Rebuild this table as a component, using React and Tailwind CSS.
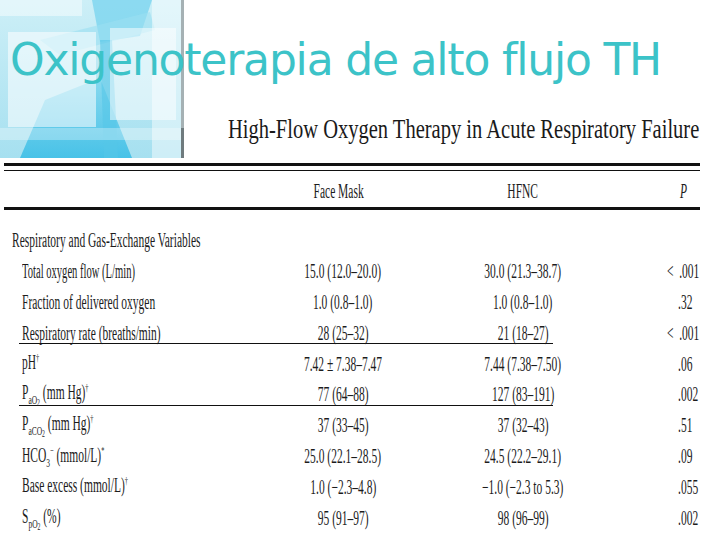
import React from "react";

const serif = { fontFamily: '"Liberation Serif", "Times New Roman", serif' };

function Decoration() {
  return (
    <svg className="absolute left-0 top-0" width="184" height="158" viewBox="0 0 184 158">
      <defs>
        <linearGradient id="dbg" x1="0" y1="0" x2="0" y2="1">
          <stop offset="0" stopColor="#cdeff7" />
          <stop offset="1" stopColor="#a6e0f0" />
        </linearGradient>
        <linearGradient id="dbeam" x1="0" y1="0" x2="0" y2="1">
          <stop offset="0" stopColor="#7fd6ee" />
          <stop offset="1" stopColor="#38bde6" />
        </linearGradient>
      </defs>
      <rect width="184" height="158" fill="url(#dbg)" />
      <polygon points="20,158 45,100 100,78 132,158" fill="url(#dbeam)" opacity="0.85" />
      <polygon points="92,0 152,0 140,36 100,42" fill="#70d2ee" opacity="0.7" />
      <polygon points="40,40 150,12 155,30 60,55" fill="#9be0f2" opacity="0.6" />
      <polygon points="100,40 112,40 118,158 104,158" fill="#55c6e8" opacity="0.6" />
      <rect x="0" y="0" width="82" height="16" fill="#ffffff" opacity="0.45" />
      <rect x="8" y="32" width="88" height="95" fill="#ffffff" opacity="0.55" />
      <rect x="110" y="28" width="66" height="92" fill="#ffffff" opacity="0.5" />
      <rect x="152" y="0" width="30" height="158" fill="#ffffff" opacity="0.45" />
      <rect x="0" y="128" width="184" height="12" fill="#ffffff" opacity="0.3" />
      <rect x="181" y="0" width="3" height="158" fill="#a5b1b4" />
      <rect x="181" y="128" width="3" height="30" fill="#6f7b7e" />
    </svg>
  );
}

function T({ children, origin = "origin-left" }) {
  return (
    <span className={`inline-block whitespace-nowrap scale-x-[0.575] ${origin}`}>{children}</span>
  );
}

function Row({ label, fm, hf, p, lt, line }) {
  return (
    <div className="grid grid-cols-[246px_186px_174px_90px] h-[30.8px] items-center">
      <div className="row-start-1 col-start-1 pl-[18px]">
        <T>{label}</T>
      </div>
      <div className="row-start-1 col-start-2 flex justify-center">
        <T origin="origin-center">{fm}</T>
      </div>
      <div className="row-start-1 col-start-3 flex justify-center">
        <T origin="origin-center">{hf}</T>
      </div>
      <div className="row-start-1 col-start-4 pl-[68px]">
        {lt ? (
          <span className="inline-block -ml-[11px]">
            <T>{"<\u00a0\u00a0" + p}</T>
          </span>
        ) : (
          <T>{p}</T>
        )}
      </div>
      {line && (
        <div className="row-start-1 col-start-1 col-span-4 self-end mb-[4px] ml-[15px] mr-[147px] h-[1px] bg-[#111]" />
      )}
    </div>
  );
}

const sub = "text-[13px] relative top-[5px] align-baseline";
const sup = "text-[11px] relative -top-[8px] align-baseline";

export default function App() {
  const rows = [
    {
      label: <span className="inline-block scale-x-[0.92] origin-left">Total oxygen flow (L/min)</span>,
      fm: "15.0 (12.0–20.0)",
      hf: "30.0 (21.3–38.7)",
      p: ".001",
      lt: true,
    },
    { label: "Fraction of delivered oxygen", fm: "1.0 (0.8–1.0)", hf: "1.0 (0.8–1.0)", p: ".32" },
    { label: "Respiratory rate (breaths/min)", fm: "28 (25–32)", hf: "21 (18–27)", p: ".001", lt: true, line: true },
    {
      label: (
        <>
          pH<span className={sup}>†</span>
        </>
      ),
      fm: "7.42 ± 7.38–7.47",
      hf: "7.44 (7.38–7.50)",
      p: ".06",
    },
    {
      label: (
        <>
          P<span className={sub}>aO<span className="text-[10px] relative top-[2px]">2</span></span> (mm Hg)
          <span className={sup}>†</span>
        </>
      ),
      fm: "77 (64–88)",
      hf: "127 (83–191)",
      p: ".002",
      line: true,
    },
    {
      label: (
        <>
          P<span className={sub}>aCO<span className="text-[10px] relative top-[2px]">2</span></span> (mm Hg)
          <span className={sup}>†</span>
        </>
      ),
      fm: "37 (33–45)",
      hf: "37 (32–43)",
      p: ".51",
    },
    {
      label: (
        <>
          HCO<span className={sub}>3</span>
          <span className={sup}>−</span> (mmol/L)<span className={sup}>*</span>
        </>
      ),
      fm: "25.0 (22.1–28.5)",
      hf: "24.5 (22.2–29.1)",
      p: ".09",
    },
    {
      label: (
        <>
          Base excess (mmol/L)<span className={sup}>†</span>
        </>
      ),
      fm: "1.0 (−2.3–4.8)",
      hf: "−1.0 (−2.3 to 5.3)",
      p: ".055",
    },
    {
      label: (
        <>
          S<span className={sub}>pO<span className="text-[10px] relative top-[2px]">2</span></span> (%)
        </>
      ),
      fm: "95 (91–97)",
      hf: "98 (96–99)",
      p: ".002",
    },
  ];

  return (
    <div className="relative w-[720px] h-[540px] overflow-hidden bg-white">
      <Decoration />
      <div className="relative flex flex-col">
        <div
          className="mt-[38px] pl-[10px] text-[44px] leading-[44px] tracking-[-1.2px] text-[#3cc3c8] whitespace-nowrap"
          style={{ fontFamily: '"DejaVu Sans", sans-serif' }}
        >
          Oxigenoterapia de alto flujo TH
        </div>
        <div className="mt-[33.5px] pl-[228px] text-[26.5px] leading-[27px] text-[#1a1a1a]" style={serif}>
          <span className="inline-block whitespace-nowrap scale-x-[0.774] origin-left">
            High-Flow Oxygen Therapy in Acute Respiratory Failure
          </span>
        </div>
        <div className="mx-[4px] w-[696px] text-[20px] leading-[20px] text-[#1c1c1c]" style={serif}>
          <div className="mt-[20.5px] h-[3px] bg-[#111]" />
          <div className="mt-[4px] h-[1px] bg-[#111]" />
          <div className="grid grid-cols-[246px_186px_174px_90px] h-[36px] pt-[4px] items-center">
            <div />
            <div className="flex justify-center pr-[8px]">
              <T origin="origin-center">Face Mask</T>
            </div>
            <div className="flex justify-center">
              <T origin="origin-center">HFNC</T>
            </div>
            <div className="pl-[70px] italic">
              <T>P</T>
            </div>
          </div>
          <div className="h-[2.5px] bg-[#111]" />
          <div className="mt-[15.6px]">
            <div className="h-[30.8px] flex items-center pl-[8px]">
              <T>Respiratory and Gas-Exchange Variables</T>
            </div>
            {rows.map((r, i) => (
              <Row key={i} {...r} />
            ))}
            <div className="h-[30.8px] flex items-center pl-[8px]">
              <T>Hemodynamic Variables</T>
            </div>
          </div>
        </div>
      </div>
    </div>
  );
}
